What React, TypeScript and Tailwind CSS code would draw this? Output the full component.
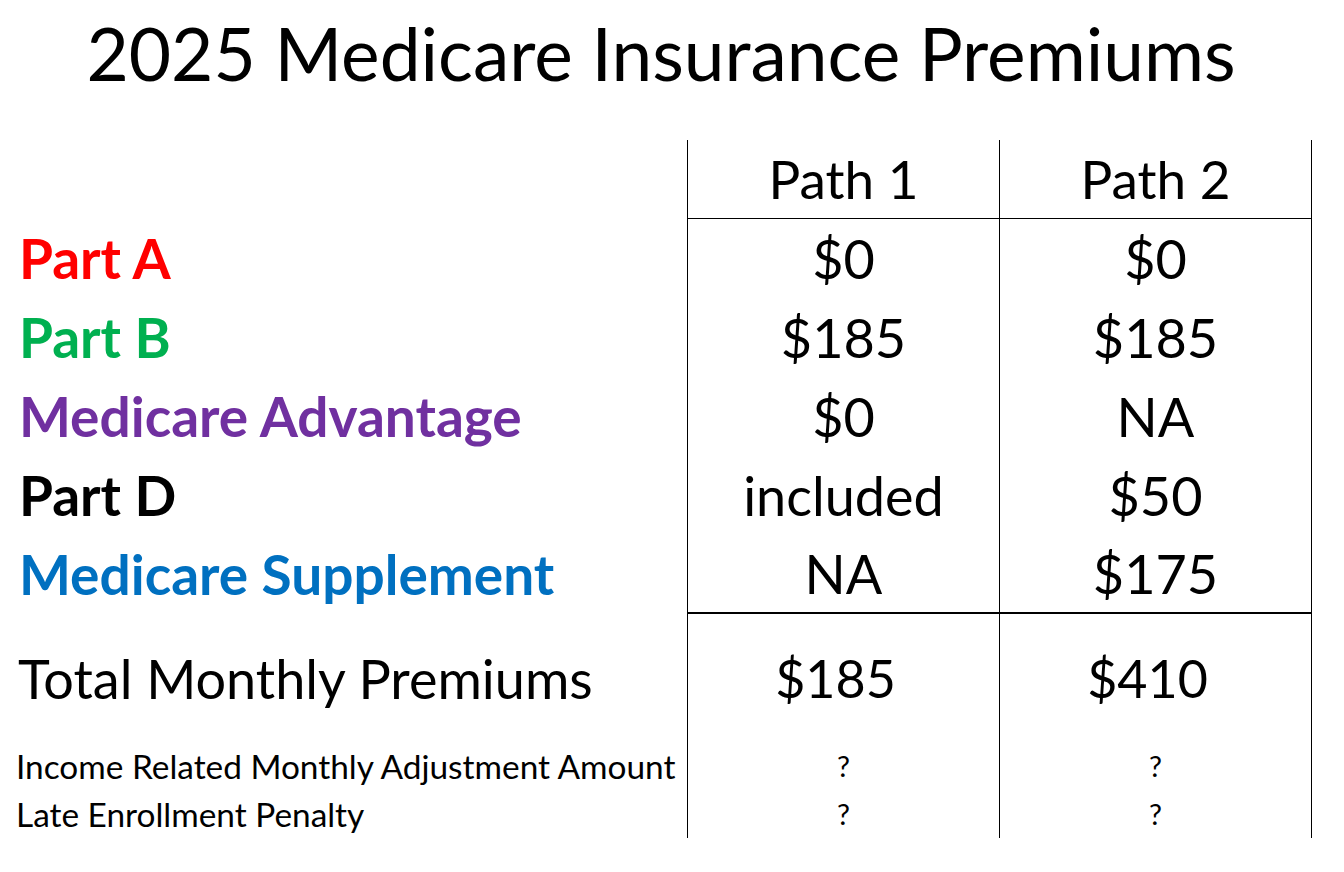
import React from 'react';

type Row = {
  label: string;
  color: string;
  path1: string;
  path2: string;
};

const parts: Row[] = [
  { label: 'Part A', color: 'text-[#ff0000]', path1: '$0', path2: '$0' },
  { label: 'Part B', color: 'text-[#00b050]', path1: '$185', path2: '$185' },
  { label: 'Medicare Advantage', color: 'text-[#7030a0]', path1: '$0', path2: 'NA' },
  { label: 'Part D', color: 'text-black', path1: 'included', path2: '$50' },
  { label: 'Medicare Supplement', color: 'text-[#0070c0]', path1: 'NA', path2: '$175' },
];

const extras = ['Income Related Monthly Adjustment Amount', 'Late Enrollment Penalty'];

const App: React.FC = () => {
  return (
    <main className="w-[1344px] h-[872px] bg-white text-black font-['Lato',sans-serif]">
      <h1 className="h-[140px] pt-[3px] pr-[22px] text-center text-[73px] leading-[100px]">2025 Medicare Insurance Premiums</h1>

      <div className="grid grid-cols-[687px_312px_313px]">
        {/* header */}
        <div className="h-[79px]" />
        <div className="h-[79px] border-l border-b border-black flex items-center justify-center text-[53px]">Path 1</div>
        <div className="h-[79px] border-l border-r border-b border-black flex items-center justify-center text-[53px]">Path 2</div>

        {/* parts */}
        {parts.map((row, i) => (
          <React.Fragment key={row.label}>
            <div className={`h-[79px] flex items-center pl-[19px] font-bold text-[55px] ${row.color}`}>{row.label}</div>
            <div className={`h-[79px] border-l border-black flex items-center justify-center text-[54px] ${i === parts.length - 1 ? 'border-b-2' : ''}`}>{row.path1}</div>
            <div className={`h-[79px] border-l border-r border-black flex items-center justify-center text-[54px] ${i === parts.length - 1 ? 'border-b-2' : ''}`}>{row.path2}</div>
          </React.Fragment>
        ))}

        {/* totals */}
        <div className="h-[128px] flex items-center pl-[18px] text-[54px]">Total Monthly Premiums</div>
        <div className="h-[128px] border-l border-black flex items-center justify-center pr-[16px] text-[52px]">$185</div>
        <div className="h-[128px] border-l border-r border-black flex items-center justify-center pr-[16px] text-[52px]">$410</div>

        {extras.map((label) => (
          <React.Fragment key={label}>
            <div className="h-[48px] flex items-center pl-[16px] text-[33.4px] whitespace-nowrap">{label}</div>
            <div className="h-[48px] border-l border-black flex items-center justify-center text-[29px]">?</div>
            <div className="h-[48px] border-l border-r border-black flex items-center justify-center text-[29px]">?</div>
          </React.Fragment>
        ))}
      </div>
    </main>
  );
};

export default App;
